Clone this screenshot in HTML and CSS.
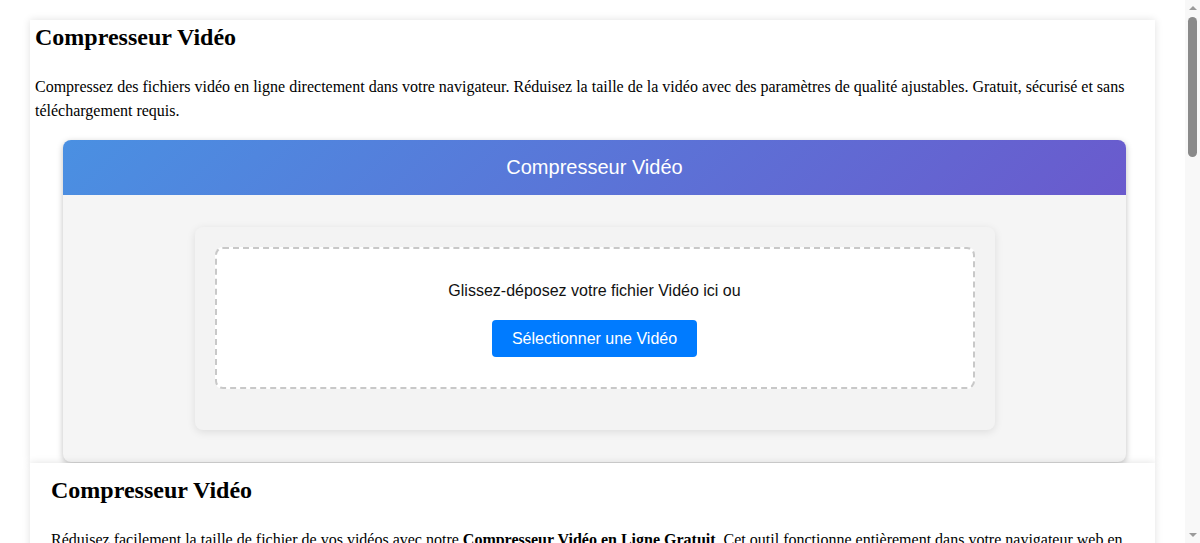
FILE: index.html
```html
<!DOCTYPE html>
<html lang="fr">
<head>
    <meta charset="UTF-8">
    <title>Compresseur Vidéo</title>
    <link rel="stylesheet" href="styles.css">
</head>
<body>
<!--    outil-->
<div class="card">
    <h2>Compresseur Vidéo</h2>
    <p>Compressez des fichiers vidéo en ligne directement dans votre navigateur. Réduisez la taille de la vidéo avec des paramètres de qualité ajustables. Gratuit, sécurisé et sans téléchargement requis.</p>
    <div class="tool">
        <div class="toolHead">Compresseur Vidéo</div>
        <div class="toolBody">
            <div class="upload">
                <!--        zone de dépôt-->
                <div class="drop">
                    <p>Glissez-déposez votre fichier Vidéo ici ou</p>
                    <button class="btnPick">Sélectionner une Vidéo</button>
                </div>
            </div>
        </div>
    </div>
</div>
<!--    description-->
<div class="card card2">
    <h2>Compresseur Vidéo</h2>
    <p>Réduisez facilement la taille de fichier de vos vidéos avec notre <b>Compresseur Vidéo en Ligne Gratuit</b>. Cet outil fonctionne entièrement dans votre navigateur web en local, ce qui signifie que vos fichiers ne quittent jamais votre appareil et restent totalement privés.</p>
</div>
<!--    barre de défilement-->
<div class="scrollbar">
    <div class="arrowUp"></div>
    <div class="thumb"></div>
    <div class="arrowDown"></div>
</div>
</body>
</html>
```

FILE: styles.css
```css
body{
    margin: 0;
    background: #fff;
    font-family: "Liberation Serif", "Times New Roman", serif;
    color: #000;
}
.card{
    margin: 20px 45px 0 30px;
    padding: 4px 5px 1px;
    background: #fff;
    box-shadow: 0 0 8px rgba(0,0,0,0.12);
}
.card h2{
    font-size: 24px;
    margin: 0 0 24px;
}
.card > p{
    font-size: 16px;
    line-height: 24px;
    margin: 0 0 17px;
}
/*    outil*/
.tool{
    margin: 0 24px 0 28px;
    border-radius: 8px;
    overflow: hidden;
    background: #f5f5f5;
    box-shadow: 0 2px 6px rgba(0,0,0,0.25);
    font-family: "Liberation Sans", Arial, sans-serif;
}
.toolHead{
    background: linear-gradient(135deg, #4a90e2, #6a5acd);
    color: #fff;
    font-size: 20px;
    line-height: 23px;
    padding: 16px;
    text-align: center;
}
.toolBody{
    padding: 32px;
}
.upload{
    max-width: 760px;
    margin: 0 auto;
    padding: 20px 20px 41px;
    background: #f3f3f3;
    border-radius: 8px;
    box-shadow: 0 2px 8px rgba(0,0,0,0.1);
}
.drop{
    background: #fff;
    border: 2px dashed #c8c8c8;
    border-radius: 8px;
    padding: 30px 20px;
    text-align: center;
}
.drop p{
    margin: 0 0 19px;
    font-size: 16px;
    line-height: 20px;
    padding-top: 2px;
    color: #111;
}
.btnPick{
    background: #007bff;
    color: #fff;
    border: none;
    border-radius: 4px;
    padding: 10px 20px;
    font-family: "Liberation Sans", Arial, sans-serif;
    font-size: 16px;
    line-height: 17px;
}
.card2{
    margin-top: 0;
    padding: 14px 21px 10px;
}
/*    barre de défilement*/
.scrollbar{
    position: fixed;
    top: 0;
    right: 0;
    width: 15px;
    height: 100%;
    background: #f8f8f8;
}
.thumb{
    position: absolute;
    top: 17px;
    left: 3px;
    width: 9px;
    height: 140px;
    border-radius: 5px;
    background: #8a8a8a;
}
.arrowUp,.arrowDown{
    position: absolute;
    left: 4px;
    width: 0;
    height: 0;
    border-left: 4px solid transparent;
    border-right: 4px solid transparent;
}
.arrowUp{
    top: 6px;
    border-bottom: 4px solid #9a9a9a;
}
.arrowDown{
    bottom: 6px;
    border-top: 4px solid #9a9a9a;
}
```
